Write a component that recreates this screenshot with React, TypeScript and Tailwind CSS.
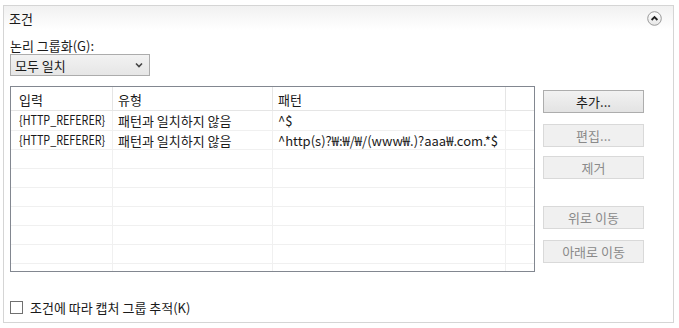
import React from "react";

const font = { fontFamily: '"Noto Sans CJK KR", sans-serif' };

const rows: [string, string, string][] = [
  ["{HTTP_REFERER}", "패턴과 일치하지 않음", "^$"],
  ["{HTTP_REFERER}", "패턴과 일치하지 않음", "^http(s)?₩:₩/₩/(www₩.)?aaa₩.com.*$"],
  ["", "", ""],
  ["", "", ""],
  ["", "", ""],
  ["", "", ""],
  ["", "", ""],
  ["", "", ""],
  ["", "", ""],
];

function Btn({ label, enabled }: { label: string; enabled?: boolean }) {
  return enabled ? (
    <div className="w-[101px] h-[23px] border border-[#adadad] bg-gradient-to-b from-[#f2f2f2] to-[#e3e3e3] flex items-center justify-center text-[13px] leading-none text-[#1a1a1a]">
      {label}
    </div>
  ) : (
    <div className="w-[101px] h-[23px] border border-[#d9d9d9] bg-[#f0f0f0] flex items-center justify-center text-[13px] leading-none text-[#8a8a8a]">
      {label}
    </div>
  );
}

export default function App() {
  return (
    <div className="w-[679px] h-[328px] bg-white pt-[5px] pl-[3px] text-[#1a1a1a]" style={font}>
      <div className="w-[671px] h-[318px] border border-[#d5d5d5] flex flex-col">
        <div className="h-[24px] bg-gradient-to-b from-[#f1f1f1] to-white flex items-center justify-between pl-[5px] pr-[11px]">
          <span className="text-[13px] leading-none">조건</span>
          <svg width="15" height="15" viewBox="0 0 15 15">
            <defs>
              <linearGradient id="cg" x1="0" y1="0" x2="0" y2="1">
                <stop offset="0" stopColor="#ffffff" />
                <stop offset="1" stopColor="#e6e6e6" />
              </linearGradient>
            </defs>
            <circle cx="7.5" cy="7.5" r="6.8" fill="url(#cg)" stroke="#9a9a9a" strokeWidth="1" />
            <path d="M4.6 9 L7.5 6 L10.4 9" fill="none" stroke="#222" strokeWidth="1.8" />
          </svg>
        </div>
        <div className="pl-[6px] flex flex-col">
          <div className="mt-[8px] h-[16px] leading-[16px] text-[13px]">논리 그룹화(G):</div>
          <div className="w-[140px] h-[22px] border border-[#acacac] bg-gradient-to-b from-[#f2f2f2] to-[#e6e6e6] flex items-center justify-between pl-[4px] pr-[6px] text-[13px] leading-none">
            <span>모두 일치</span>
            <svg width="8" height="6" viewBox="0 0 8 6">
              <path d="M1 1.5 L4 4.5 L7 1.5" fill="none" stroke="#444" strokeWidth="1.6" />
            </svg>
          </div>
          <div className="mt-[10px] flex">
            <div className="w-[525px] h-[186px] border border-[#828790] bg-white overflow-hidden text-[13px] leading-none">
              <div className="flex h-[24px] border-b border-[#e5e5e5]">
                <div className="w-[102px] border-r border-[#e5e5e5] pl-[8px] flex items-center pt-[2px]">입력</div>
                <div className="w-[160px] border-r border-[#e5e5e5] pl-[5px] flex items-center pt-[2px]">유형</div>
                <div className="w-[233px] border-r border-[#e5e5e5] pl-[5px] flex items-center pt-[2px]">패턴</div>
                <div className="w-[28px]"></div>
              </div>
              {rows.map((r, i) => (
                <div key={i} className={`flex border-b border-[#f0f0f0] ${i === 0 ? "h-[20px]" : "h-[19px]"}`}>
                  <div className="w-[102px] border-r border-[#f0f0f0] pl-[8px] flex items-center whitespace-nowrap">
                    <span className="inline-block origin-left scale-x-[0.86] text-[12.5px]">{r[0]}</span>
                  </div>
                  <div className="w-[160px] border-r border-[#f0f0f0] pl-[5px] flex items-center whitespace-nowrap overflow-hidden">{r[1]}</div>
                  <div className="w-[233px] border-r border-[#f0f0f0] pl-[5px] flex items-center whitespace-nowrap overflow-hidden">{r[2]}</div>
                  <div className="w-[28px]"></div>
                </div>
              ))}
            </div>
            <div className="ml-[8px] pt-[4px] flex flex-col">
              <Btn label="추가..." enabled />
              <div className="mt-[11px]"><Btn label="편집..." /></div>
              <div className="mt-[9px]"><Btn label="제거" /></div>
              <div className="mt-[27px]"><Btn label="위로 이동" /></div>
              <div className="mt-[11px]"><Btn label="아래로 이동" /></div>
            </div>
          </div>
          <div className="mt-[28px] flex items-center h-[14px]">
            <div className="w-[13px] h-[13px] border border-[#707070] bg-white"></div>
            <span className="ml-[7px] text-[13px] leading-none">조건에 따라 캡처 그룹 추적(K)</span>
          </div>
        </div>
      </div>
    </div>
  );
}
